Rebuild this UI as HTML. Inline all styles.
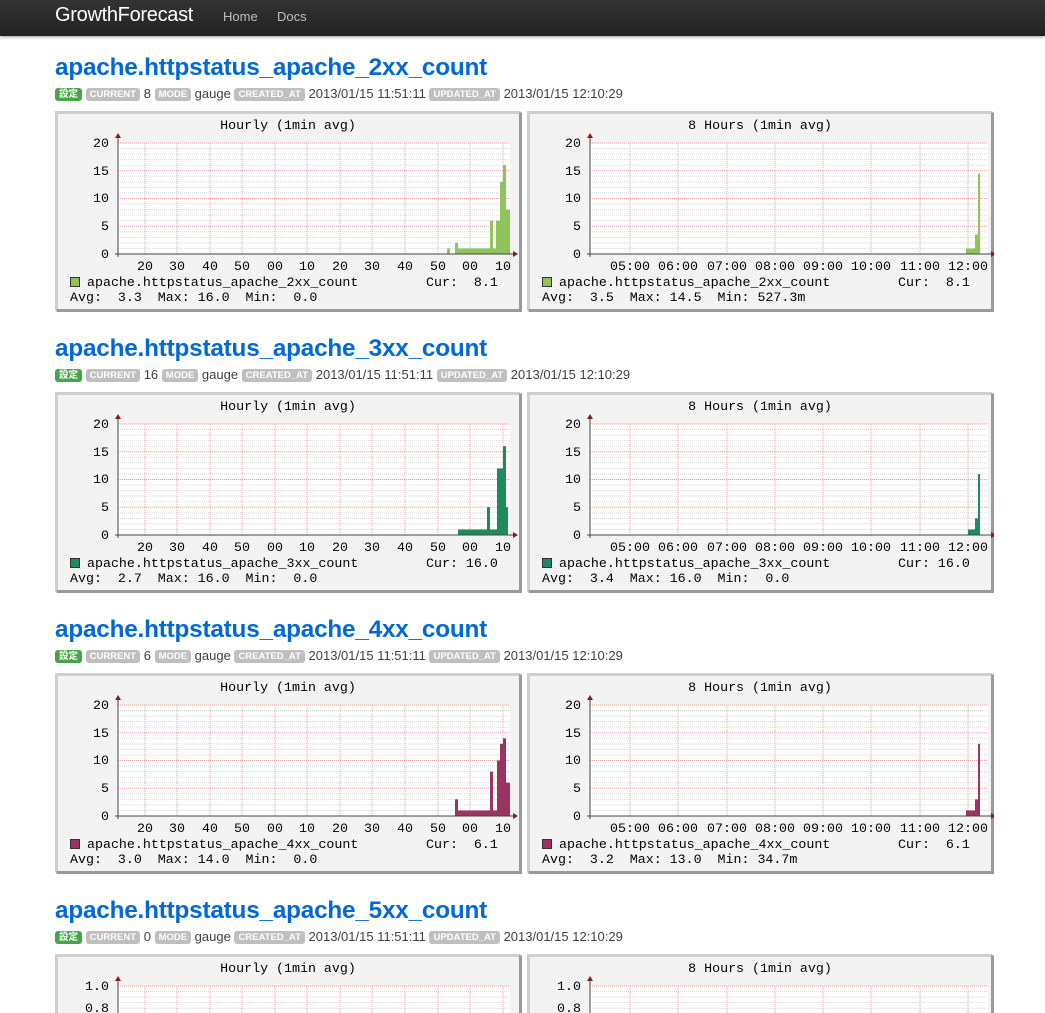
<!DOCTYPE html>
<html><head><meta charset="utf-8">
<style>
html,body{margin:0;background:#fff;font-family:"Liberation Sans","Noto Sans CJK JP",sans-serif;width:1045px;height:1013px;overflow:hidden;position:relative}
.nav{position:absolute;left:0;top:0;width:1045px;height:36px;background:linear-gradient(#333,#222);box-shadow:0 1px 3px rgba(0,0,0,.4)}
.brand{position:absolute;left:55px;top:4px;font-size:20px;color:#fff;letter-spacing:-0.3px}
.nl{position:absolute;top:9px;font-size:13px;color:#bfbfbf}
.sec{position:absolute;left:55px;width:940px}
h2{margin:0;font-size:24.3px;font-weight:bold;color:#0069d6;letter-spacing:-0.2px;height:28px;line-height:28px}
.meta{font-size:13px;color:#404040;margin-top:4px;white-space:nowrap;height:16px;line-height:16px}
.b{display:inline-block;background:#bfbfbf;color:#fff;font-size:9.5px;font-weight:bold;padding:0 4px;border-radius:3px;line-height:13px;vertical-align:1px;text-transform:uppercase}
.g{background:#46a546}
svg.p{position:absolute;font-family:"Liberation Mono",monospace;font-size:13.3px}
svg.p text{white-space:pre}
</style></head><body>
<div class="nav"><div class="brand">GrowthForecast</div><div class="nl" style="left:223px">Home</div><div class="nl" style="left:277px">Docs</div></div>

<div class="sec" style="top:54px"><h2>apache.httpstatus_apache_2xx_count</h2><div class="meta"><span class="b g">設定</span> <span class="b">current</span> 8 <span class="b">mode</span> gauge <span class="b">created_at</span> 2013/01/15 11:51:11 <span class="b">updated_at</span> 2013/01/15 12:10:29</div></div>
<div class="sec" style="top:335px"><h2>apache.httpstatus_apache_3xx_count</h2><div class="meta"><span class="b g">設定</span> <span class="b">current</span> 16 <span class="b">mode</span> gauge <span class="b">created_at</span> 2013/01/15 11:51:11 <span class="b">updated_at</span> 2013/01/15 12:10:29</div></div>
<div class="sec" style="top:616px"><h2>apache.httpstatus_apache_4xx_count</h2><div class="meta"><span class="b g">設定</span> <span class="b">current</span> 6 <span class="b">mode</span> gauge <span class="b">created_at</span> 2013/01/15 11:51:11 <span class="b">updated_at</span> 2013/01/15 12:10:29</div></div>
<div class="sec" style="top:897px"><h2>apache.httpstatus_apache_5xx_count</h2><div class="meta"><span class="b g">設定</span> <span class="b">current</span> 0 <span class="b">mode</span> gauge <span class="b">created_at</span> 2013/01/15 11:51:11 <span class="b">updated_at</span> 2013/01/15 12:10:29</div></div>

<!-- 2xx -->
<svg class="p h" data-c="#8fc35c" data-b="447,450,1;455,458,2;458,490,1;490,493,6;493,496,1;496,500,6;500,503,13;503,506,16;506,510,8" style="left:55px;top:111px" width="467" height="201">
<text x="233" y="18" text-anchor="middle">Hourly (1min avg)</text>
<g text-anchor="end"><text x="54" y="36">20</text><text x="54" y="64">15</text><text x="54" y="91">10</text><text x="54" y="119">5</text><text x="54" y="147">0</text></g>
<g text-anchor="middle"><text x="90" y="159">20</text><text x="122" y="159">30</text><text x="155" y="159">40</text><text x="187" y="159">50</text><text x="220" y="159">00</text><text x="252" y="159">10</text><text x="285" y="159">20</text><text x="317" y="159">30</text><text x="350" y="159">40</text><text x="383" y="159">50</text><text x="415" y="159">00</text><text x="448" y="159">10</text></g>
<text x="32" y="175">apache.httpstatus_apache_2xx_count</text><text x="371" y="175">Cur:  8.1</text>
<text x="15" y="190">Avg:  3.3  Max: 16.0  Min:  0.0</text></svg>
<svg class="p e" data-c="#8fc35c" data-b="966,975,1;975,978,3.5;978,980,14.5" style="left:527px;top:111px" width="467" height="201">
<text x="233" y="18" text-anchor="middle">8 Hours (1min avg)</text>
<g text-anchor="end"><text x="54" y="36">20</text><text x="54" y="64">15</text><text x="54" y="91">10</text><text x="54" y="119">5</text><text x="54" y="147">0</text></g>
<g text-anchor="middle"><text x="103" y="159">05:00</text><text x="151" y="159">06:00</text><text x="200" y="159">07:00</text><text x="248" y="159">08:00</text><text x="296" y="159">09:00</text><text x="344" y="159">10:00</text><text x="393" y="159">11:00</text><text x="441" y="159">12:00</text></g>
<text x="32" y="175">apache.httpstatus_apache_2xx_count</text><text x="371" y="175">Cur:  8.1</text>
<text x="15" y="190">Avg:  3.5  Max: 14.5  Min: 527.3m</text></svg>

<!-- 3xx -->
<svg class="p h" data-c="#1f8a5e" data-b="458,487,1;487,490,5;490,497,1;497,503,12;503,506,16;506,508,5" style="left:55px;top:392px" width="467" height="201">
<text x="233" y="18" text-anchor="middle">Hourly (1min avg)</text>
<g text-anchor="end"><text x="54" y="36">20</text><text x="54" y="64">15</text><text x="54" y="91">10</text><text x="54" y="119">5</text><text x="54" y="147">0</text></g>
<g text-anchor="middle"><text x="90" y="159">20</text><text x="122" y="159">30</text><text x="155" y="159">40</text><text x="187" y="159">50</text><text x="220" y="159">00</text><text x="252" y="159">10</text><text x="285" y="159">20</text><text x="317" y="159">30</text><text x="350" y="159">40</text><text x="383" y="159">50</text><text x="415" y="159">00</text><text x="448" y="159">10</text></g>
<text x="32" y="175">apache.httpstatus_apache_3xx_count</text><text x="371" y="175">Cur: 16.0</text>
<text x="15" y="190">Avg:  2.7  Max: 16.0  Min:  0.0</text></svg>
<svg class="p e" data-c="#1f8a5e" data-b="968,975,1;975,978,3;978,980,11" style="left:527px;top:392px" width="467" height="201">
<text x="233" y="18" text-anchor="middle">8 Hours (1min avg)</text>
<g text-anchor="end"><text x="54" y="36">20</text><text x="54" y="64">15</text><text x="54" y="91">10</text><text x="54" y="119">5</text><text x="54" y="147">0</text></g>
<g text-anchor="middle"><text x="103" y="159">05:00</text><text x="151" y="159">06:00</text><text x="200" y="159">07:00</text><text x="248" y="159">08:00</text><text x="296" y="159">09:00</text><text x="344" y="159">10:00</text><text x="393" y="159">11:00</text><text x="441" y="159">12:00</text></g>
<text x="32" y="175">apache.httpstatus_apache_3xx_count</text><text x="371" y="175">Cur: 16.0</text>
<text x="15" y="190">Avg:  3.4  Max: 16.0  Min:  0.0</text></svg>

<!-- 4xx -->
<svg class="p h" data-c="#9b3460" data-b="455,458,3;458,490,1;490,493,8;493,497,1;497,500,10;500,503,13;503,506,14;506,510,6" style="left:55px;top:673px" width="467" height="201">
<text x="233" y="18" text-anchor="middle">Hourly (1min avg)</text>
<g text-anchor="end"><text x="54" y="36">20</text><text x="54" y="64">15</text><text x="54" y="91">10</text><text x="54" y="119">5</text><text x="54" y="147">0</text></g>
<g text-anchor="middle"><text x="90" y="159">20</text><text x="122" y="159">30</text><text x="155" y="159">40</text><text x="187" y="159">50</text><text x="220" y="159">00</text><text x="252" y="159">10</text><text x="285" y="159">20</text><text x="317" y="159">30</text><text x="350" y="159">40</text><text x="383" y="159">50</text><text x="415" y="159">00</text><text x="448" y="159">10</text></g>
<text x="32" y="175">apache.httpstatus_apache_4xx_count</text><text x="371" y="175">Cur:  6.1</text>
<text x="15" y="190">Avg:  3.0  Max: 14.0  Min:  0.0</text></svg>
<svg class="p e" data-c="#9b3460" data-b="966,975,1;975,978,3;978,980,13" style="left:527px;top:673px" width="467" height="201">
<text x="233" y="18" text-anchor="middle">8 Hours (1min avg)</text>
<g text-anchor="end"><text x="54" y="36">20</text><text x="54" y="64">15</text><text x="54" y="91">10</text><text x="54" y="119">5</text><text x="54" y="147">0</text></g>
<g text-anchor="middle"><text x="103" y="159">05:00</text><text x="151" y="159">06:00</text><text x="200" y="159">07:00</text><text x="248" y="159">08:00</text><text x="296" y="159">09:00</text><text x="344" y="159">10:00</text><text x="393" y="159">11:00</text><text x="441" y="159">12:00</text></g>
<text x="32" y="175">apache.httpstatus_apache_4xx_count</text><text x="371" y="175">Cur:  6.1</text>
<text x="15" y="190">Avg:  3.2  Max: 13.0  Min: 34.7m</text></svg>

<!-- 5xx -->
<svg class="p h" data-c="#888" data-b="" style="left:55px;top:954px" width="467" height="59">
<text x="233" y="18" text-anchor="middle">Hourly (1min avg)</text>
<g text-anchor="end"><text x="54" y="36">1.0</text><text x="54" y="58">0.8</text></g></svg>
<svg class="p e" data-c="#888" data-b="" style="left:527px;top:954px" width="467" height="59">
<text x="233" y="18" text-anchor="middle">8 Hours (1min avg)</text>
<g text-anchor="end"><text x="54" y="36">1.0</text><text x="54" y="58">0.8</text></g></svg>

<script>
var NS="http://www.w3.org/2000/svg";
function el(t,a){var e=document.createElementNS(NS,t);for(var k in a)e.setAttribute(k,a[k]);return e;}
document.querySelectorAll("svg.p").forEach(function(s){
  var hr=s.classList.contains("h"), ox=parseFloat(s.style.left);
  var L=63,R=hr?455:461,T=32,B=143,sc=(B-T)/20;
  var g=el("g",{});
  g.appendChild(el("rect",{x:1.5,y:1.5,width:464,height:198,fill:"#f3f3f3",stroke:"none"}));
  g.appendChild(el("path",{d:"M1.5 199.5V1.5H465.5",fill:"none",stroke:"#cfcfcf","stroke-width":3}));
  g.appendChild(el("path",{d:"M1.5 199.5H465.5V1.5",fill:"none",stroke:"#9a9a9a","stroke-width":3}));
  g.appendChild(el("rect",{x:L,y:T,width:R-L,height:B-T,fill:"#fff"}));
  for(var i=1;i<20;i++){var y=B-i*sc;g.appendChild(el("line",{x1:L,x2:R,y1:y,y2:y,stroke:i%5?"#d8d8d8":"#f0a0a0","stroke-dasharray":"1,1","stroke-width":1}));}
  g.appendChild(el("line",{x1:L,x2:R,y1:T,y2:T,stroke:"#f0a0a0","stroke-dasharray":"1,1"}));
  var xs=hr?[90,122,155,187,220,252,285,317,350,383,415,448]:[103,151,200,248,296,344,393,441];
  xs.forEach(function(x){g.appendChild(el("line",{x1:x,x2:x,y1:T,y2:B,stroke:"#f0a0a0","stroke-dasharray":"1,1"}));});
  var c=s.getAttribute("data-c"), b=s.getAttribute("data-b");
  if(b)b.split(";").forEach(function(r){var p=r.split(",").map(Number);var h=p[2]*sc;
    g.appendChild(el("rect",{x:p[0]-ox,y:B-h,width:p[1]-p[0],height:h,fill:c}));});
  g.appendChild(el("line",{x1:L,x2:L,y1:T-6,y2:B+3,stroke:"#444"}));
  g.appendChild(el("line",{x1:L-3,x2:R+4,y1:B,y2:B,stroke:"#444"}));
  g.appendChild(el("path",{d:"M"+(L-3)+" "+(T-5)+"L"+L+" "+(T-10)+"L"+(L+3)+" "+(T-5)+"Z",fill:"#8b1a1a"}));
  g.appendChild(el("path",{d:"M"+(R+3)+" "+(B-3)+"L"+(R+8)+" "+B+"L"+(R+3)+" "+(B+3)+"Z",fill:"#8b1a1a"}));
  if(b&&s.querySelectorAll("text").length>8)g.appendChild(el("rect",{x:15.5,y:166.5,width:9,height:9,fill:c,stroke:"#333"}));
  s.insertBefore(g,s.firstChild);
});
</script>
</body></html>
